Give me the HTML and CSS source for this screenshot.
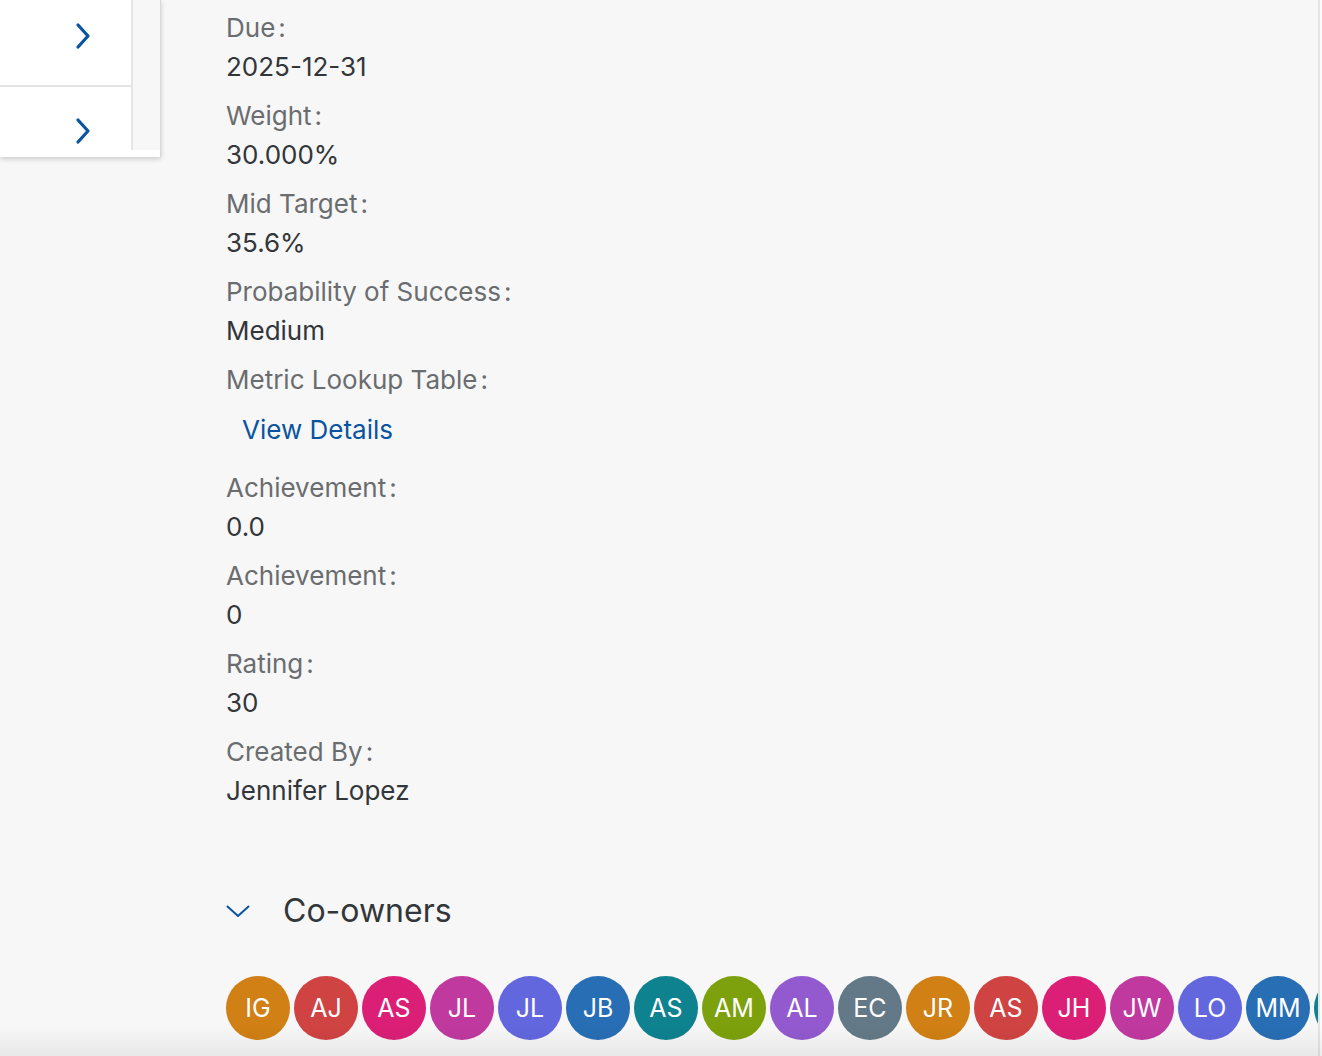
FILE: index.html
```html
<!DOCTYPE html>
<html lang="en">
<head>
    <meta charset="UTF-8">
    <meta name="viewport" content="width=device-width, initial-scale=1.0">
    <title>Goal Details</title>
    <link rel="stylesheet" href="styles.css">
</head>
<body>
    <div class="page">
        <div class="side-panel">
            <div class="side-list">
                <div class="side-row first">
                    <svg class="chevron" viewBox="0 0 16 28" width="16" height="28"><path d="M3 3 L13 14 L3 25" fill="none" stroke="#0854a0" stroke-width="3.2" stroke-linecap="round" stroke-linejoin="round"/></svg>
                </div>
                <div class="side-row">
                    <svg class="chevron" viewBox="0 0 16 28" width="16" height="28"><path d="M3 3 L13 14 L3 25" fill="none" stroke="#0854a0" stroke-width="3.2" stroke-linecap="round" stroke-linejoin="round"/></svg>
                </div>
            </div>
            <div class="side-track"></div>
        </div>

        <div class="content">
            <div class="field">
                <div class="label">Due<span class="colon">:</span></div>
                <div class="value">2025-12-31</div>
            </div>
            <div class="field">
                <div class="label">Weight<span class="colon">:</span></div>
                <div class="value">30.000%</div>
            </div>
            <div class="field">
                <div class="label">Mid Target<span class="colon">:</span></div>
                <div class="value">35.6%</div>
            </div>
            <div class="field">
                <div class="label">Probability of Success<span class="colon">:</span></div>
                <div class="value">Medium</div>
            </div>
            <div class="field">
                <div class="label">Metric Lookup Table<span class="colon">:</span></div>
                <div class="link-row"><a href="#" class="link">View Details</a></div>
            </div>
            <div class="field">
                <div class="label">Achievement<span class="colon">:</span></div>
                <div class="value">0.0</div>
            </div>
            <div class="field">
                <div class="label">Achievement<span class="colon">:</span></div>
                <div class="value">0</div>
            </div>
            <div class="field">
                <div class="label">Rating<span class="colon">:</span></div>
                <div class="value">30</div>
            </div>
            <div class="field">
                <div class="label">Created By<span class="colon">:</span></div>
                <div class="value">Jennifer Lopez</div>
            </div>

            <div class="section-header">
                <svg class="expand" viewBox="0 0 24 16" width="24" height="16"><path d="M1.5 3.5 L12 13 L22.5 3.5" fill="none" stroke="#0854a0" stroke-width="2" stroke-linecap="round" stroke-linejoin="round"/></svg>
                <span class="section-title">Co-owners</span>
            </div>

            <div class="avatars">
                <span class="avatar accent1">IG</span>
                <span class="avatar accent2">AJ</span>
                <span class="avatar accent3">AS</span>
                <span class="avatar accent4">JL</span>
                <span class="avatar accent5">JL</span>
                <span class="avatar accent6">JB</span>
                <span class="avatar accent7">AS</span>
                <span class="avatar accent8">AM</span>
                <span class="avatar accent9">AL</span>
                <span class="avatar accent10">EC</span>
                <span class="avatar accent1">JR</span>
                <span class="avatar accent2">AS</span>
                <span class="avatar accent3">JH</span>
                <span class="avatar accent4">JW</span>
                <span class="avatar accent5">LO</span>
                <span class="avatar accent6">MM</span>
                <span class="avatar accent7"></span>
            </div>
        </div>

        <div class="scrollbar"></div>
    </div>
    <div class="bottom-fade"></div>
</body>
</html>
```

FILE: styles.css
```css
html, body {
    margin: 0;
    padding: 0;
    height: 100%;
}
body {
    font-family: Inter, "Noto Sans", Arial, sans-serif;
    background-color: #f7f7f7;
    color: #32363a;
    overflow: hidden;
}
.page {
    display: flex;
    height: 1056px;
}
.side-panel {
    display: flex;
    align-self: flex-start;
    width: 160px;
    height: 157px;
    background-color: #fff;
    border-right: 1px solid #d9d9d9;
    box-shadow: 0 2px 5px rgba(0, 0, 0, 0.18);
    flex-shrink: 0;
}
.side-list {
    width: 131px;
    height: 150px;
    border-right: 2px solid #e5e5e5;
}
.side-row {
    display: flex;
    justify-content: flex-end;
    padding-right: 40px;
    padding-top: 30px;
    box-sizing: border-box;
    height: 63px;
}
.side-row.first {
    height: 87px;
    border-bottom: 2px solid #e5e5e5;
    padding-top: 22px;
}
.side-row .chevron {
    display: block;
}
.side-track {
    width: 27px;
    height: 150px;
    background-color: #f7f7f7;
}
.content {
    flex: 1;
    padding-left: 65px;
    padding-top: 8px;
    overflow: hidden;
    min-width: 0;
}
.field {
    display: flex;
    flex-direction: column;
}
.label {
    color: #6a6d70;
    font-size: 26px;
    line-height: 40px;
}
.colon {
    margin-left: 3px;
}
.value {
    font-size: 26px;
    line-height: 38px;
    padding-bottom: 10px;
}
.link-row {
    height: 68px;
    padding-left: 16px;
    line-height: 60px;
}
.link {
    color: #0854a0;
    text-decoration: none;
    font-size: 26px;
}
.section-header {
    display: flex;
    align-items: center;
    margin-top: 62px;
    height: 56px;
}
.expand {
    margin-right: 33px;
    margin-top: 2px;
}
.section-title {
    font-size: 32px;
    color: #32363a;
}
.avatars {
    display: flex;
    gap: 4px;
    margin-top: 38px;
    white-space: nowrap;
}
.avatar {
    display: flex;
    align-items: center;
    justify-content: center;
    flex-shrink: 0;
    width: 64px;
    height: 64px;
    border-radius: 50%;
    color: #fff;
    font-size: 25px;
}
.accent1 { background-color: #d08014; }
.accent2 { background-color: #d04343; }
.accent3 { background-color: #db1f77; }
.accent4 { background-color: #c0399f; }
.accent5 { background-color: #6367de; }
.accent6 { background-color: #286eb4; }
.accent7 { background-color: #0f828f; }
.accent8 { background-color: #7ca10c; }
.accent9 { background-color: #925ace; }
.accent10 { background-color: #647987; }
.scrollbar {
    width: 2px;
    flex-shrink: 0;
    background-color: #e5e5e5;
    border-right: 2px solid #fbfbfb;
}
.bottom-fade {
    position: fixed;
    left: 0;
    right: 0;
    bottom: 0;
    height: 30px;
    background: linear-gradient(to bottom, rgba(0, 0, 0, 0), rgba(0, 0, 0, 0.06));
    pointer-events: none;
}
```
